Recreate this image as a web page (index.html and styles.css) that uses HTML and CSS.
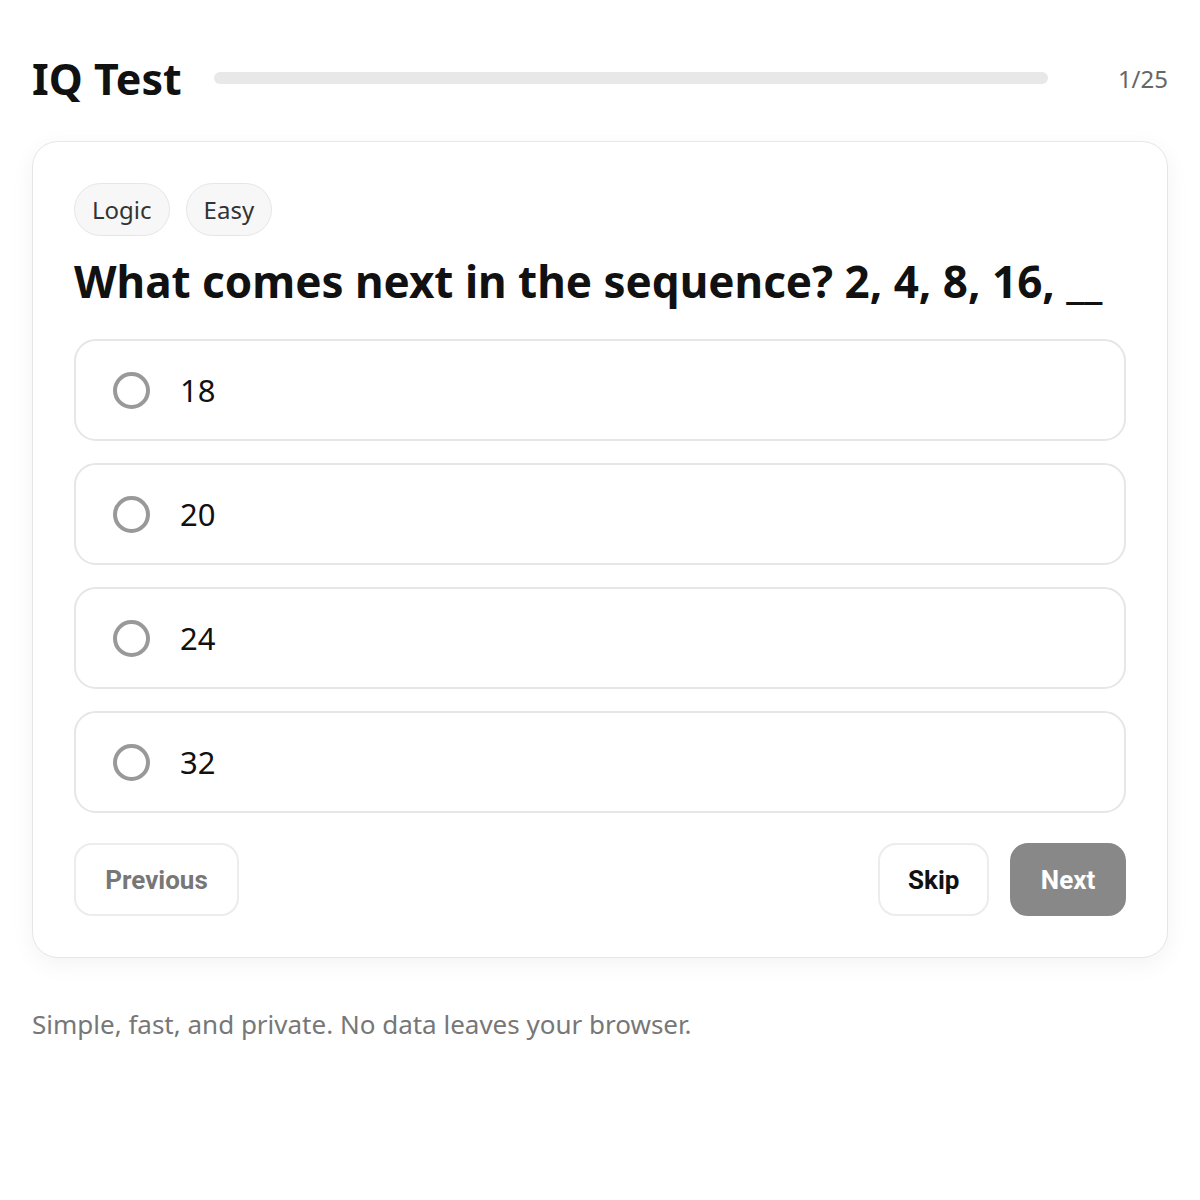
FILE: index.html
```html
<!DOCTYPE html>
<html lang="en">
<head>
<meta charset="utf-8">
<title>IQ Test</title>
<link rel="stylesheet" href="styles.css">
</head>
<body>
<main class="page">
  <header class="header">
    <h1 class="title">IQ Test</h1>
    <div class="progress"><div class="progress-fill" style="width:0%"></div></div>
    <span class="counter">1/25</span>
  </header>
  <section class="card">
    <div class="chips">
      <span class="chip">Logic</span>
      <span class="chip">Easy</span>
    </div>
    <h2 class="question">What comes next in the sequence? 2, 4, 8, 16, __</h2>
    <div class="options">
      <label class="option"><span class="radio"></span><span class="option-text">18</span></label>
      <label class="option"><span class="radio"></span><span class="option-text">20</span></label>
      <label class="option"><span class="radio"></span><span class="option-text">24</span></label>
      <label class="option"><span class="radio"></span><span class="option-text">32</span></label>
    </div>
    <div class="actions">
      <button class="btn btn-prev">Previous</button>
      <div class="actions-right">
        <button class="btn btn-skip">Skip</button>
        <button class="btn btn-next">Next</button>
      </div>
    </div>
  </section>
  <p class="footer">Simple, fast, and private. No data leaves your browser.</p>
</main>
</body>
</html>
```

FILE: styles.css
```css
* { box-sizing: border-box; }
html, body { margin: 0; padding: 0; background: #ffffff; }
body {
  font-family: "Noto Sans", "Open Sans", sans-serif;
  color: #111111;
}
.page {
  padding: 46px 32px 32px;
}
.header {
  display: flex;
  align-items: center;
  gap: 32px;
  height: 64px;
}
.title {
  margin: 0;
  font-size: 43px;
  font-weight: 700;
  line-height: 1;
  color: #111111;
  white-space: nowrap;
}
.progress {
  flex: 1;
  height: 12px;
  border-radius: 6px;
  background: #e8e8e8;
  overflow: hidden;
  margin-right: 38px;
}
.progress-fill { height: 100%; background: #888888; }
.counter {
  font-size: 24px;
  color: #666666;
}
.card {
  margin-top: 31px;
  border: 1px solid #e6e6e6;
  border-radius: 26px;
  padding: 41px 41px 41px;
  box-shadow: 0 6px 24px rgba(0, 0, 0, 0.05);
  background: #ffffff;
}
.chips {
  display: flex;
  gap: 16px;
}
.chip {
  display: inline-flex;
  align-items: center;
  height: 53px;
  padding: 0 17px;
  border: 1px solid #e6e6e6;
  border-radius: 27px;
  background: #f7f7f7;
  font-size: 24px;
  color: #333333;
}
.question {
  margin: 12px 0 0;
  font-size: 44px;
  font-weight: 700;
  line-height: 66px;
  color: #111111;
}
.options {
  margin-top: 25px;
  display: flex;
  flex-direction: column;
  gap: 22px;
}
.option {
  display: flex;
  align-items: center;
  gap: 30px;
  height: 102px;
  padding: 0 37px;
  border: 2px solid #e6e6e6;
  border-radius: 22px;
  background: #ffffff;
}
.radio {
  width: 37px;
  height: 37px;
  border-radius: 50%;
  border: 4px solid #999999;
  flex: none;
}
.option-text {
  font-size: 31px;
  color: #111111;
}
.actions {
  margin-top: 30px;
  display: flex;
  justify-content: space-between;
  align-items: center;
}
.actions-right {
  display: flex;
  gap: 21px;
}
.btn {
  height: 73px;
  border-radius: 18px;
  border: 2px solid #ececec;
  background: #ffffff;
  font-family: Roboto, "Liberation Sans", sans-serif;
  font-size: 26px;
  font-weight: 700;
  padding: 0 28px;
}
.btn-prev { color: #777777; width: 165px; }
.btn-skip { color: #111111; width: 111px; }
.btn-next {
  width: 116px;
  background: #888888;
  border-color: #888888;
  color: #ffffff;
}
.footer {
  margin: 48px 0 0;
  font-size: 26px;
  color: #777777;
}
```
